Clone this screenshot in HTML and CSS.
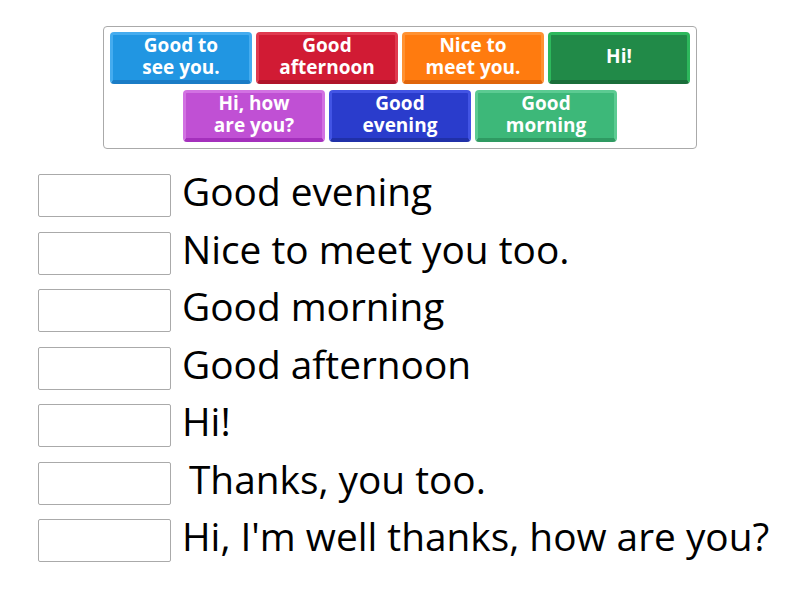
FILE: index.html
```html
<!DOCTYPE html>
<html>
<head>
<meta charset="utf-8">
<link rel="stylesheet" href="styles.css">
</head>
<body>
<div class="page">
  <div class="bank">
    <div class="bank-row">
      <div class="tile t-blue">Good to<br>see you.</div>
      <div class="tile t-red">Good<br>afternoon</div>
      <div class="tile t-orange">Nice to<br>meet you.</div>
      <div class="tile t-green">Hi!</div>
    </div>
    <div class="bank-row">
      <div class="tile t-purple">Hi, how<br>are you?</div>
      <div class="tile t-navy">Good<br>evening</div>
      <div class="tile t-mint">Good<br>morning</div>
    </div>
  </div>
  <div class="list">
    <div class="item"><div class="slot"></div><div class="label">Good evening</div></div>
    <div class="item"><div class="slot"></div><div class="label">Nice to meet you too.</div></div>
    <div class="item"><div class="slot"></div><div class="label">Good morning</div></div>
    <div class="item"><div class="slot"></div><div class="label">Good afternoon</div></div>
    <div class="item"><div class="slot"></div><div class="label">Hi!</div></div>
    <div class="item"><div class="slot"></div><div class="label label-t">Thanks, you too.</div></div>
    <div class="item"><div class="slot"></div><div class="label">Hi, I'm well thanks, how are you?</div></div>
  </div>
</div>
</body>
</html>
```
FILE: styles.css
```css
html, body {
  margin: 0;
  padding: 0;
  background: #fff;
}
body {
  font-family: "Open Sans", "Noto Sans", sans-serif;
  color: #000;
}
.page {
  width: 800px;
  height: 600px;
  padding-top: 26px;
  box-sizing: border-box;
}
.bank {
  width: 594px;
  margin-left: 103px;
  border: 1px solid #aaa;
  border-radius: 4px;
  box-sizing: border-box;
  padding: 5px 6px 6px 6px;
  display: flex;
  flex-direction: column;
  gap: 6px;
}
.bank-row {
  display: flex;
  justify-content: center;
  gap: 4px;
}
.tile {
  width: 142px;
  height: 52px;
  box-sizing: border-box;
  border-radius: 4px;
  color: #fff;
  font-weight: 700;
  font-size: 19px;
  line-height: 22px;
  text-align: center;
  display: flex;
  align-items: center;
  justify-content: center;
  padding-bottom: 3px;
  border: 3px solid;
  border-bottom-width: 4px;
}
.t-blue { background: #2196e2; border-color: #45acef #45acef #1a7cc6 #45acef; }
.t-red { background: #d11b34; border-color: #e03a4f #e03a4f #b0142a #e03a4f; }
.t-orange { background: #ff7b0f; border-color: #ff9232 #ff9232 #e0650a #ff9232; }
.t-green { background: #218a48; border-color: #2db85c #2db85c #1a6e3a #2db85c; }
.t-purple { background: #c050d4; border-color: #d272e2 #d272e2 #a430bc #d272e2; }
.t-navy { background: #2a3ccc; border-color: #4254e4 #4254e4 #2030a8 #4254e4; }
.t-mint { background: #3db879; border-color: #5ccb92 #5ccb92 #2f9a62 #5ccb92; }

.list {
  margin-top: 25px;
  margin-left: 38px;
  display: flex;
  flex-direction: column;
  gap: 14.5px;
}
.item {
  display: flex;
  align-items: center;
  height: 43px;
}
.slot {
  width: 133px;
  height: 43px;
  box-sizing: border-box;
  border: 1px solid #aaa;
  border-radius: 2px;
  background: #fff;
  flex: none;
}
.label {
  font-size: 38.8px;
  line-height: 43px;
  margin-left: 11px;
  white-space: nowrap;
  position: relative;
  top: -4px;
}
.label-t {
  margin-left: 18px;
}
```
